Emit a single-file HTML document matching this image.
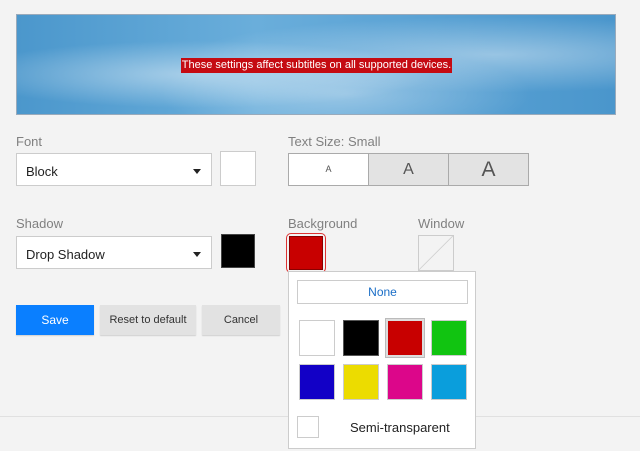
<!DOCTYPE html>
<html><head><style>
body{margin:0;width:640px;height:451px;background:#f3f3f3;font-family:"Liberation Sans",Arial,sans-serif;position:relative;overflow:hidden}
.a{position:absolute}
.lbl{font-size:13px;color:#808080}
.sel{background:#fff;border:1px solid #ccc;box-sizing:border-box;font-size:13px;color:#222}
.sel::after{content:"";position:absolute;right:10px;top:15px;border:4px solid transparent;border-top:5px solid #222}
.btn{box-sizing:border-box;text-align:center;font-size:11px;line-height:30px;background:#e2e2e2;color:#333;box-shadow:0 1px 1px rgba(0,0,0,.15)}
.sw{position:absolute;width:34px;height:34px;box-sizing:border-box;border:1px solid #ccc}
</style></head><body>
<div class="a" style="left:16px;top:14px;width:600px;height:101px;border:1px solid #9ab;box-sizing:border-box;background:radial-gradient(ellipse at 30% 60%,rgba(255,255,255,.45),transparent 40%),radial-gradient(ellipse at 80% 40%,rgba(255,255,255,.4),transparent 45%),radial-gradient(ellipse at 55% 80%,rgba(255,255,255,.35),transparent 40%),linear-gradient(90deg,#4b97cc,#6aaedb 40%,#5ea5d6 60%,#4a96cc)"></div>
<div class="a" style="left:181px;top:58px;width:271px;background:#c50b12;color:#fff;font-size:11px;line-height:15px;text-align:center;white-space:nowrap">These settings affect subtitles on all supported devices.</div>
<div class="a lbl" style="left:16px;top:134px">Font</div>
<div class="a sel" style="left:16px;top:153px;width:196px;height:33px;padding:10px 9px">Block</div>
<div class="sw" style="left:220px;top:151px;background:#fff;height:35px;width:36px"></div>
<div class="a lbl" style="left:288px;top:134px">Text Size: Small</div>
<div class="a" style="left:288px;top:153px;width:241px;height:33px;border:1px solid #aaa;box-sizing:border-box;display:flex">
<div style="flex:1;background:#fff;text-align:center;font-size:9px;line-height:31px;color:#555">A</div>
<div style="flex:1;background:#e3e3e3;border-left:1px solid #aaa;text-align:center;font-size:16px;line-height:31px;color:#555">A</div>
<div style="flex:1;background:#e3e3e3;border-left:1px solid #aaa;text-align:center;font-size:21px;line-height:31px;color:#555">A</div></div>
<div class="a lbl" style="left:16px;top:216px">Shadow</div>
<div class="a sel" style="left:16px;top:236px;width:196px;height:33px;padding:10px 9px">Drop Shadow</div>
<div class="sw" style="left:221px;top:234px;background:#000;border-color:#444"></div>
<div class="a lbl" style="left:288px;top:216px">Background</div>
<div class="a" style="left:286px;top:233px;width:40px;height:40px;border:1px solid #d33;border-radius:5px;box-sizing:border-box;padding:2px"><div style="background:#c80000;width:100%;height:100%;border:1px solid #800;box-sizing:border-box"></div></div>
<div class="a lbl" style="left:418px;top:216px">Window</div>
<div class="a" style="left:418px;top:235px;width:36px;height:36px;border:1px solid #ccc;box-sizing:border-box;background:linear-gradient(to top left,transparent 49%,#ccc 50%,transparent 52%)"></div>
<div class="a btn" style="left:16px;top:305px;width:78px;height:30px;background:#0a7fff;color:#fff;font-size:12px">Save</div>
<div class="a btn" style="left:100px;top:305px;width:96px;height:30px">Reset to default</div>
<div class="a btn" style="left:202px;top:305px;width:78px;height:30px">Cancel</div>
<div class="a" style="left:0;top:416px;width:640px;height:1px;background:#e0e0e0"></div>
<div class="a" style="left:288px;top:271px;width:188px;height:178px;background:#fff;border:1px solid #ccc;box-sizing:border-box"></div>
<div class="a" style="left:297px;top:280px;width:171px;height:24px;border:1px solid #ccc;box-sizing:border-box;text-align:center;line-height:22px;font-size:12px;color:#1a6ec7">None</div>
<div class="sw" style="left:299px;top:320px;background:#fff;height:36px;width:36px"></div>
<div class="sw" style="left:343px;top:320px;background:#000;height:36px;width:36px;border-color:#555"></div>
<div class="sw" style="left:386px;top:319px;background:#c80000;height:38px;width:38px;border:2px solid #ddd;outline:1px solid #bbb"></div>
<div class="sw" style="left:431px;top:320px;background:#11c411;height:36px;width:36px"></div>
<div class="sw" style="left:299px;top:364px;background:#1200c6;height:36px;width:36px"></div>
<div class="sw" style="left:343px;top:364px;background:#ecdc00;height:36px;width:36px"></div>
<div class="sw" style="left:387px;top:364px;background:#dc068a;height:36px;width:36px"></div>
<div class="sw" style="left:431px;top:364px;background:#0a9edc;height:36px;width:36px"></div>
<div class="sw" style="left:297px;top:416px;width:22px;height:22px;background:#fff"></div>
<div class="a" style="left:350px;top:420px;font-size:13px;color:#222">Semi-transparent</div>
</body></html>
